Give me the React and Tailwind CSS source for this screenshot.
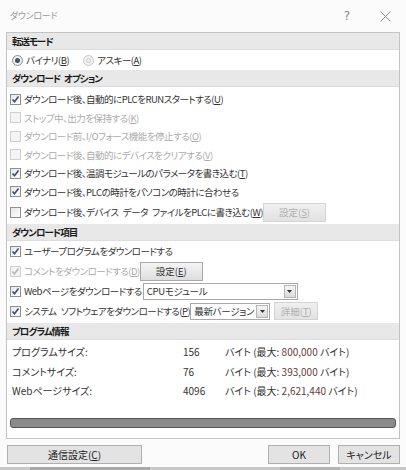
import React from "react";

function Check({ checked = true, disabled = false }) {
  return (
    <span
      className={
        disabled
          ? "flex w-[11px] h-[11px] shrink-0 items-center justify-center border border-[#cfcfcf] bg-[#f4f4f4]"
          : "flex w-[11px] h-[11px] shrink-0 items-center justify-center border border-[#8e8f8f] bg-gradient-to-br from-[#e6e6e6] to-[#ffffff]"
      }
    >
      {checked && (
        <svg width="9" height="9" viewBox="0 0 9 9">
          <path
            d="M1.5 4.5 L3.5 6.8 L7.5 1.5"
            fill="none"
            stroke={disabled ? "#b4b4b4" : "#3d4d6b"}
            strokeWidth="1.6"
          />
        </svg>
      )}
    </span>
  );
}

function Radio({ checked, disabled }) {
  return (
    <span
      className={
        disabled
          ? "flex w-[11px] h-[11px] shrink-0 items-center justify-center rounded-full border border-[#c8c8c8] bg-[#f2f2f2]"
          : "flex w-[11px] h-[11px] shrink-0 items-center justify-center rounded-full border border-[#8e8f8f] bg-[#f0f0f0]"
      }
    >
      {checked ? (
        <span className="w-[5px] h-[5px] rounded-full bg-[#45536e]" />
      ) : (
        <span className="w-[5px] h-[5px] rounded-full border border-[#c8c8c8]" />
      )}
    </span>
  );
}

function Header({ children }) {
  return (
    <div className="flex items-center h-[17px] bg-[#e8e8e8] border-b border-[#dcdcdc] pl-[5px] text-[9.5px] tracking-[-1px] font-bold text-[#1a1a1a] whitespace-pre">
      {children}
    </div>
  );
}

function Opt({ checked = true, disabled = false, children }) {
  return (
    <div className="flex items-center h-[18.5px] pl-[3px]">
      <Check checked={checked} disabled={disabled} />
      <span
        className={
          disabled
            ? "ml-[3px] text-[9.5px] tracking-[-0.5px] text-[#ababab] whitespace-pre"
            : "ml-[3px] text-[9.5px] tracking-[-0.5px] text-[#333333] whitespace-pre"
        }
      >
        {children}
      </span>
    </div>
  );
}

function Btn({ children, disabled, className }) {
  return (
    <div
      className={
        (disabled
          ? "flex items-center justify-center border border-[#d4d4d4] bg-gradient-to-b from-[#f0f0f0] to-[#e2e2e2] text-[9.5px] text-[#b0b0b0] "
          : "flex items-center justify-center border border-[#a9a9a9] bg-gradient-to-b from-[#f4f4f4] to-[#dedede] text-[9.5px] text-[#333333] ") +
        className
      }
    >
      {children}
    </div>
  );
}

function Select({ children, className }) {
  return (
    <div
      className={
        "flex items-center border border-[#a8a8a8] bg-white pl-[3px] pr-[1px] text-[9.5px] tracking-[-0.3px] text-[#333333] " +
        className
      }
    >
      <span className="flex-1 whitespace-nowrap">{children}</span>
      <span className="flex w-[12px] h-[13px] items-center justify-center border border-[#b5b5b5] bg-gradient-to-b from-[#f6f6f6] to-[#dadada]">
        <svg width="5" height="3" viewBox="0 0 5 3">
          <path d="M0 0 L5 0 L2.5 3 Z" fill="#333" />
        </svg>
      </span>
    </div>
  );
}

export default function App() {
  return (
    <div className="w-[406px] h-[470px] bg-[#fbfbfb] overflow-hidden flex flex-col [font-family:'Noto_Sans_CJK_JP','Noto_Sans',sans-serif] [font-feature-settings:'palt']">
      {/* Title bar */}
      <div className="flex items-center h-[32px] pl-[10px] shrink-0">
        <span className="text-[9px] tracking-[-0.3px] text-[#9a9a9a]">ダウンロード</span>
        <span className="ml-auto text-[12px] text-[#8a8a8a] [font-family:'DejaVu_Sans',sans-serif]">?</span>
        <svg className="ml-[30px] mr-[15px]" width="11" height="11" viewBox="0 0 11 11">
          <path d="M0.5 0.5 L10.5 10.5 M10.5 0.5 L0.5 10.5" stroke="#8a8a8a" strokeWidth="1" />
        </svg>
      </div>

      {/* Main panel */}
      <div className="ml-[6px] w-[394px] h-[407px] shrink-0 border border-[#c3c3c3] bg-white flex flex-col">
        <Header>転送モード</Header>
        <div className="flex items-center h-[20px] pt-[1px] pl-[5px] text-[9.5px] tracking-[-0.5px] text-[#333333]">
          <Radio checked />
          <span className="ml-[3px]">
            バイナリ(<u>B</u>)
          </span>
          <span className="ml-[14px]">
            <Radio disabled />
          </span>
          <span className="ml-[3px]">
            アスキー(<u>A</u>)
          </span>
        </div>
        <Header>{"ダウンロード\u2002オプション"}</Header>
        <div className="pt-[3px] pb-[1px] flex flex-col">
          <Opt>
            ダウンロード後、自動的にPLCをRUNスタートする(<u>U</u>)
          </Opt>
          <Opt checked={false} disabled>
            ストップ中、出力を保持する(<u>K</u>)
          </Opt>
          <Opt checked={false} disabled>
            ダウンロード前、I/Oフォース機能を停止する(<u>O</u>)
          </Opt>
          <Opt checked={false} disabled>
            ダウンロード後、自動的にデバイスをクリアする(<u>V</u>)
          </Opt>
          <Opt>
            ダウンロード後、温調モジュールのパラメータを書き込む(<u>T</u>)
          </Opt>
          <Opt>ダウンロード後、PLCの時計をパソコンの時計に合わせる</Opt>
          <div className="flex items-center h-[22px] pl-[3px]">
            <Check checked={false} />
            <span className="ml-[3px] text-[9.5px] tracking-[-0.5px] text-[#333333] whitespace-pre">
              {"ダウンロード後、デバイス\u2002データ\u2002ファイルをPLCに書き込む("}<u>W</u>)
            </span>
            <Btn disabled className="ml-[0px] w-[63px] h-[19px]">
              設定(<u>S</u>)
            </Btn>
          </div>
        </div>
        <Header>ダウンロード項目</Header>
        <div className="flex flex-col">
          <div className="flex items-center h-[20px] pl-[3px]">
            <Check />
            <span className="ml-[3px] text-[9.5px] tracking-[-0.5px] text-[#333333] whitespace-nowrap">
              ユーザープログラムをダウンロードする
            </span>
          </div>
          <div className="flex items-center h-[20px] pl-[3px]">
            <Check disabled />
            <span className="ml-[3px] text-[9.5px] tracking-[-0.5px] text-[#ababab] whitespace-nowrap">
              コメントをダウンロードする(<u>D</u>)
            </span>
            <Btn className="ml-[0px] w-[63px] h-[19px]">
              設定(<u>E</u>)
            </Btn>
          </div>
          <div className="flex items-center h-[20px] pl-[3px]">
            <Check />
            <span className="ml-[3px] text-[9.5px] tracking-[-0.5px] text-[#333333] whitespace-nowrap">
              Webページをダウンロードする
            </span>
            <Select className="ml-[1px] w-[155px] h-[17px]">CPUモジュール</Select>
          </div>
          <div className="flex items-center h-[20px] pl-[3px]">
            <Check />
            <span className="ml-[3px] text-[9.5px] tracking-[-0.5px] text-[#333333] whitespace-pre">
              {"システム\u2002ソフトウェアをダウンロードする("}<u>P</u>)
            </span>
            <Select className="ml-[0px] w-[80px] h-[17px]">最新バージョン</Select>
            <Btn disabled className="ml-[4px] w-[44px] h-[18px]">
              詳細(<u>T</u>)
            </Btn>
          </div>
        </div>
        <div className="mt-[2px]">
          <Header>プログラム情報</Header>
        </div>
        <div className="pt-[2px] flex flex-col text-[10px] text-[#333333]">
          {[
            ["プログラムサイズ:", "156", "800,000"],
            ["コメントサイズ:", "76", "393,000"],
            ["Webページサイズ:", "4096", "2,621,440"],
          ].map(([label, n, max]) => (
            <div key={label} className="flex items-center h-[19.5px]">
              <span className="pl-[5px] w-[176px]">{label}</span>
              <span className="w-[42px]">{n}</span>
              <span className="whitespace-nowrap">
                バイト (最大: <span className="text-[#6a3a3a]">{max}</span> バイト)
              </span>
            </div>
          ))}
        </div>
        <div className="flex-1" />
        <div className="mx-[3px] mb-[10px] h-[10px] rounded-[3px] border border-[#555555] bg-[#8b8b8b]" />
      </div>

      {/* Bottom buttons */}
      <div className="flex items-center h-[25px] mt-[3px] pl-[7px] pr-[6px] shrink-0">
        <div className="flex items-center justify-center w-[135px] h-[19px] border border-[#b0b0b0] bg-[#e3e3e3] text-[10px] text-[#222]">
          通信設定(<u>C</u>)
        </div>
        <div className="ml-auto flex items-center justify-center w-[62px] h-[19px] border border-[#b0b0b0] bg-[#e3e3e3] text-[10px] text-[#222]">
          OK
        </div>
        <div className="ml-[8px] flex items-center justify-center w-[62px] h-[19px] border border-[#b0b0b0] bg-[#e3e3e3] text-[10px] text-[#222]">
          キャンセル
        </div>
      </div>
      <div className="flex-1 bg-[#c9c9c9] flex">
        <div className="ml-[30px] w-[120px] bg-[#a8a8a8]" />
        <div className="ml-[130px] w-[60px] bg-[#b5b5b5]" />
      </div>
    </div>
  );
}
